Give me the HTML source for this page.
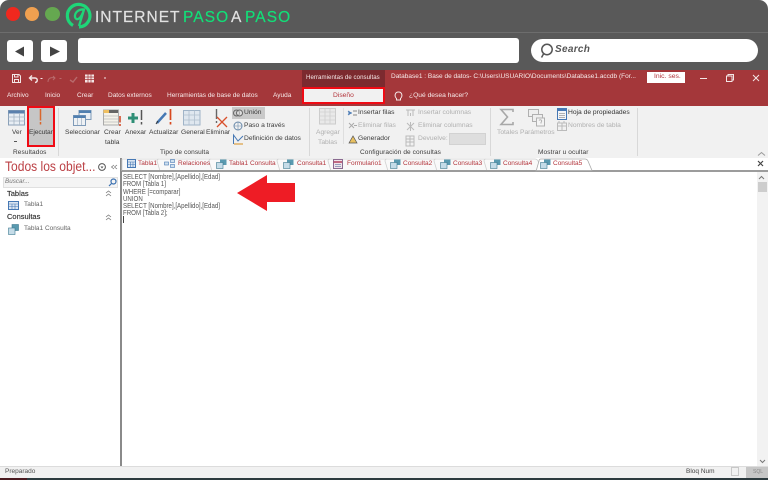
<!DOCTYPE html>
<html>
<head>
<meta charset="utf-8">
<style>
html,body{margin:0;padding:0;width:768px;height:480px;overflow:hidden;background:#fff}
#p{position:relative;width:768px;height:480px;overflow:hidden;font-family:"Liberation Sans",sans-serif;background:#fff;filter:blur(.3px)}
#p div,#p span.t{position:absolute}
.t{white-space:nowrap;line-height:1;color:#3c3c3c;font-size:6.7px}
.w{color:#f7eaea}
.g{color:#b0b0b0}
.r{color:#b3353c}
.b{background:#fff;border-radius:3px}
svg{position:absolute;overflow:visible}
</style>
</head>
<body>
<div id="p">
<!-- browser chrome -->
<div style="left:0;top:0;width:768px;height:70px;background:#595959;border-radius:9px 9px 0 0"></div>
<div style="left:0;top:32px;width:768px;height:1px;background:#6d6d6d"></div>
<div style="left:6px;top:7px;width:14px;height:14px;border-radius:50%;background:#f0281e"></div>
<div style="left:25px;top:7px;width:14px;height:14px;border-radius:50%;background:#f0a050"></div>
<div style="left:45px;top:7px;width:15px;height:14px;border-radius:50%;background:#65a850"></div>
<svg style="left:65px;top:2px" width="30" height="28" viewBox="0 0 30 28"><path d="M8 23.500A11.300 11.300 0 1 1 14 25" fill="none" stroke="#1ed678" stroke-width="3.200"/><path d="M19 7.500C13 7 9.500 11 10 15C11 19 16 18 19 7.500ZM19 7.500L14 24" fill="none" stroke="#1ed678" stroke-width="2.300"/></svg>
<span class="t" style="left:95px;top:10px;font-size:15.500px;color:#e2e2e2;letter-spacing:1px;-webkit-text-stroke:.2px #e2e2e2">INTERNET</span>
<span class="t" style="left:183px;top:10px;font-size:15.500px;color:#12df78;letter-spacing:1.100px;-webkit-text-stroke:.2px #12df78">PASO</span>
<span class="t" style="left:231px;top:10px;font-size:15.500px;color:#e2e2e2;-webkit-text-stroke:.2px #e2e2e2">A</span>
<span class="t" style="left:245px;top:10px;font-size:15.500px;color:#12df78;letter-spacing:1.100px;-webkit-text-stroke:.2px #12df78">PASO</span>

<div class="b" style="left:7px;top:40px;width:26px;height:22px"></div>
<svg style="left:14px;top:46px" width="12" height="11"><path d="M1 5.500L10 .5V10.500Z" fill="#444"/></svg>
<div class="b" style="left:41px;top:40px;width:26px;height:22px"></div>
<svg style="left:49px;top:46px" width="12" height="11"><path d="M11 5.500L1 .5V10.500Z" fill="#444"/></svg>
<div class="b" style="left:78px;top:38px;width:441px;height:25px"></div>
<div style="left:531px;top:39px;width:227px;height:23px;background:#fff;border-radius:12px"></div>
<svg style="left:539px;top:43px" width="15" height="16"><circle cx="8" cy="6.500" r="5.200" fill="none" stroke="#555" stroke-width="1.500"/><path d="M4.500 11L2.500 14.500" stroke="#555" stroke-width="1.500"/></svg>
<span class="t" style="left:555px;top:45px;font-size:10px;font-weight:bold;font-style:italic;color:#555;letter-spacing:.3px">Search</span>

<!-- title bar -->
<div style="left:0;top:70px;width:768px;height:36px;background:#a4373a"></div>
<div style="left:302px;top:70px;width:83px;height:17px;background:#7c2a2f"></div>
<svg style="left:11px;top:73px" width="90" height="11" fill="none" stroke="#f3e6e6"><path d="M1.500 1.500H8L9.500 3V9.500H1.500ZM3.500 1.500V4H7V1.500M3.500 9.500V6.500H7.500V9.500"/><path d="M19 5H24C27 5 27 9 24 9.500M21 2.500L18.500 5L21 7.500" stroke-width="1.400"/><path d="M29.500 5.500H31.500" stroke-width="1"/><path d="M37 9C37 5 40 4 44 5M42 3L44 5L42 7" stroke="#b86a6c"/><path d="M48.500 5.500H50.500" stroke="#b86a6c"/><path d="M59 7L62 9L66 4" stroke="#b86a6c" stroke-width="1.400"/><rect x="74" y="1.500" width="9" height="8" fill="#f3e6e6" stroke="none"/><path d="M74 4H83M74 6.500H83M77 1.500V9.500M80 1.500V9.500" stroke="#a4373a" stroke-width=".7"/><path d="M93 5H95" stroke-width="1"/></svg>
<span class="t w" style="left:306px;top:75px;font-size:6.100px;letter-spacing:.05px">Herramientas de consultas</span>
<span class="t w" style="left:391px;top:74px;font-size:6.500px">Database1 : Base de datos- C:\Users\USUARIO\Documents\Database1.accdb (For...</span>
<div style="left:647px;top:72px;width:38px;height:11px;background:#fff"></div>
<span class="t r" style="left:654px;top:74px;font-size:6.800px">Inic. ses.</span>
<div style="left:700px;top:78px;width:7px;height:1px;background:#f3e6e6"></div>
<svg style="left:726px;top:74px" width="9" height="9" fill="none" stroke="#f3e6e6"><rect x=".5" y="2" width="5.500" height="5.500"/><path d="M2 2V.5H7.500V6H6"/></svg>
<svg style="left:752px;top:74px" width="9" height="9" stroke="#f3e6e6"><path d="M1 1L7 7M7 1L1 7"/></svg>

<!-- tabs -->
<span class="t w" style="left:7px;top:93px;font-size:6.500px">Archivo</span>
<span class="t w" style="left:45px;top:93px;font-size:6.500px">Inicio</span>
<span class="t w" style="left:77px;top:93px;font-size:6.500px">Crear</span>
<span class="t w" style="left:108px;top:93px;font-size:6.500px">Datos externos</span>
<span class="t w" style="left:167px;top:93px;font-size:6.500px">Herramientas de base de datos</span>
<span class="t w" style="left:273px;top:93px;font-size:6.500px">Ayuda</span>
<div style="left:302px;top:87px;width:83px;height:17px;background:#f1f1f1;border:2px solid #f00a14;box-sizing:border-box"></div>
<span class="t r" style="left:333px;top:93px">Diseño</span>
<svg style="left:394px;top:91px" width="9" height="12" fill="none" stroke="#f3e6e6"><path d="M2.500 7.500C0 5 1 1 4.500 1S9 5 6.500 7.500V9H2.500Z"/></svg>
<span class="t w" style="left:409px;top:93px">¿Qué desea hacer?</span>

<!-- ribbon -->
<div style="left:0;top:106px;width:768px;height:52px;background:#f1f1f1"></div>
<div style="left:58px;top:108px;width:1px;height:48px;background:#d8d8d8"></div>
<div style="left:309px;top:108px;width:1px;height:48px;background:#d8d8d8"></div>
<div style="left:490px;top:108px;width:1px;height:48px;background:#d8d8d8"></div>
<div style="left:637px;top:108px;width:1px;height:48px;background:#d8d8d8"></div>

<!-- Ver -->
<svg style="left:8px;top:110px" width="18" height="16"><rect x=".5" y=".5" width="16" height="14.500" fill="#e8eef4" stroke="#8aa0b8"/><rect x=".5" y=".5" width="16" height="3" fill="#5a80ad"/><path d="M.5 7H17M.5 11H17M6 3V15M11.500 3V15" stroke="#a5b4c4" stroke-width=".8"/></svg>
<span class="t" style="left:12px;top:130px;font-size:6.500px">Ver</span>
<div style="left:14px;top:141px;width:3px;height:1px;background:#555"></div>
<!-- Ejecutar -->
<div style="left:27px;top:106px;width:28px;height:41px;background:#c6c6c6;border:2px solid #f00a14;box-sizing:border-box"></div>
<svg style="left:38px;top:108px" width="5" height="18"><path d="M2.500 1V12.500M2.500 14V16.500" stroke="#d9662b" stroke-width="1.500"/></svg>
<span class="t" style="left:29px;top:130px;font-size:6.700px;letter-spacing:-.1px">Ejecutar</span>
<span class="t" style="left:13px;top:150px;font-size:6.500px;letter-spacing:.1px">Resultados</span>

<!-- query type -->
<svg style="left:73px;top:110px" width="19" height="17"><rect x="6" y=".5" width="12" height="9" fill="#e8eef4" stroke="#7e9ab8"/><rect x="6" y=".5" width="12" height="2.500" fill="#4f7fb0"/><rect x=".5" y="5.500" width="12" height="10" fill="#eef1f4" stroke="#7e9ab8"/><rect x=".5" y="5.500" width="12" height="2.500" fill="#4f7fb0"/><path d="M4.500 8V15M8.500 8V15" stroke="#9fb0c2" stroke-width=".7"/></svg>
<span class="t" style="left:65px;top:130px">Seleccionar</span>
<svg style="left:103px;top:109px" width="19" height="18"><rect x=".5" y="1" width="15" height="15" fill="#f4f2ea" stroke="#aaa"/><rect x=".5" y="1" width="6" height="3" fill="#f0c060"/><rect x="6" y="1" width="9" height="3" fill="#666"/><path d="M1 7H15M1 10H15M1 13H15" stroke="#bbb" stroke-width=".7"/><path d="M17 7V13.500M17 15V17" stroke="#d0431f" stroke-width="1.500"/></svg>
<span class="t" style="left:104px;top:130px">Crear</span>
<span class="t" style="left:105px;top:140px">tabla</span>
<svg style="left:127px;top:109px" width="18" height="18"><path d="M6 4V14M1 9H11" stroke="#2f8f76" stroke-width="3"/><path d="M14.500 1V11M14.500 13V15.500" stroke="#555" stroke-width="1.500"/></svg>
<span class="t" style="left:125px;top:130px">Anexar</span>
<svg style="left:155px;top:108px" width="19" height="18"><path d="M2 15L11 5" stroke="#4678b4" stroke-width="2.500"/><path d="M1 16L3 13" stroke="#333"/><path d="M15.500 1V12M15.500 14V16.500" stroke="#d8481e" stroke-width="1.700"/></svg>
<span class="t" style="left:149px;top:130px">Actualizar</span>
<svg style="left:183px;top:110px" width="18" height="16"><rect x=".5" y=".5" width="16.500" height="14.500" fill="#dfe7ef" stroke="#a0b4c8"/><path d="M.5 5H17M.5 10H17M6 .5V15M11.500 .5V15" stroke="#b0bfce" stroke-width=".8"/></svg>
<span class="t" style="left:181px;top:130px">General</span>
<svg style="left:214px;top:108px" width="16" height="20"><path d="M2.500 1V11M2.500 13V15" stroke="#666" stroke-width="1.400"/><path d="M3 9L13 19M13 9L3 19" stroke="#d9502c" stroke-width="1.300"/></svg>
<span class="t" style="left:206px;top:130px">Eliminar</span>
<div style="left:232px;top:107px;width:33px;height:12px;background:#c9c9c9"></div>
<svg style="left:233px;top:108px" width="11" height="44" fill="none" stroke="#666"><circle cx="3.500" cy="5" r="3"/><circle cx="6.500" cy="5" r="3" fill="#fff" fill-opacity=".4"/><circle cx="5" cy="18" r="4" stroke="#6a8aaa"/><path d="M1 18H9M5 14V22" stroke="#6a8aaa" stroke-width=".6"/><path d="M.5 36V27L5 33L10 28" stroke="#4678b4"/><path d="M1 36H10" stroke="#d8901e"/></svg>
<span class="t" style="left:244px;top:110px">Unión</span>
<span class="t" style="left:244px;top:123px">Paso a través</span>
<span class="t" style="left:244px;top:136px">Definición de datos</span>
<span class="t" style="left:160px;top:150px;font-size:6.500px;letter-spacing:.1px">Tipo de consulta</span>

<!-- config -->
<svg style="left:319px;top:108px" width="18" height="17"><rect x=".5" y=".5" width="16" height="15.500" fill="#e9e9e9" stroke="#ccc"/><path d="M.5 4H16M.5 8H16M.5 12H16M6 .5V16M11 .5V16" stroke="#cfcfcf" stroke-width=".8"/></svg>
<span class="t g" style="left:316px;top:130px">Agregar</span>
<span class="t g" style="left:318px;top:140px">Tablas</span>
<div style="left:343px;top:108px;width:1px;height:36px;background:#dedede"></div>
<svg style="left:348px;top:108px" width="9" height="40"><path d="M0 5H4M0 3L3 5L0 7" stroke="#4678b4" fill="none"/><path d="M5 3H9M5 7H9" stroke="#888"/><path d="M1 15L6 20M6 15L1 20M6 17.500H9" stroke="#aaa" fill="none"/><path d="M1 35L5 28L9 35Z" fill="#e8c060" stroke="#555" stroke-width=".7"/></svg>
<span class="t" style="left:358px;top:110px">Insertar filas</span>
<span class="t g" style="left:358px;top:123px">Eliminar filas</span>
<span class="t" style="left:358px;top:136px">Generador</span>
<svg style="left:405px;top:108px" width="12" height="40" fill="none" stroke="#bbb"><path d="M1 2H10M3 2V8M8 2V8M5.500 5V8"/><path d="M2 15L9 22M9 15L2 22M5.500 14V23"/><path d="M1 28H9V38H1ZM1 31H9M1 34H9M5 28V38"/></svg>
<span class="t g" style="left:418px;top:110px">Insertar columnas</span>
<span class="t g" style="left:418px;top:123px">Eliminar columnas</span>
<span class="t g" style="left:418px;top:136px">Devuelve:</span>
<div style="left:449px;top:133px;width:37px;height:12px;background:#dedede;border:1px solid #d2d2d2;box-sizing:border-box"></div>
<span class="t" style="left:360px;top:150px;font-size:6.500px;letter-spacing:.1px">Configuración de consultas</span>

<!-- show -->
<svg style="left:499px;top:108px" width="16" height="18"><path d="M14 4V1.500H2L8.500 9L2 16.500H14V14" fill="none" stroke="#a8a8a8" stroke-width="1.600"/></svg>
<span class="t g" style="left:497px;top:130px">Totales</span>
<span class="t g" style="left:520px;top:130px">Parámetros</span>
<svg style="left:528px;top:109px" width="18" height="18" fill="none" stroke="#b0b0b0"><rect x=".5" y=".5" width="10" height="7" fill="#eee"/><rect x="4.500" y="5.500" width="10" height="7" fill="#eee"/><rect x="8.500" y="9" width="8" height="8" fill="#f4f4f4"/><path d="M11 11.500C12 10 15 11 13 13.500V14.500"/></svg>
<svg style="left:557px;top:108px" width="10" height="12"><rect x=".5" y=".5" width="9" height="11" fill="#f4f6f8" stroke="#4678b4"/><rect x=".5" y=".5" width="9" height="2.500" fill="#4678b4"/><path d="M2 5.500H8M2 7.500H8M2 9.500H8" stroke="#999" stroke-width=".7"/></svg>
<span class="t" style="left:568px;top:110px;color:#333">Hoja de propiedades</span>
<svg style="left:557px;top:121px" width="10" height="10" fill="none" stroke="#bbb"><path d="M.5 2H9.500V9.500H.5ZM.5 5H9.500M5 2V9.500M2 0V2M7 0V2"/></svg>
<span class="t g" style="left:568px;top:123px">Nombres de tabla</span>
<span class="t" style="left:538px;top:150px;font-size:6.500px;letter-spacing:.1px">Mostrar u ocultar</span>
<svg style="left:757px;top:151px" width="9" height="6" fill="none" stroke="#999"><path d="M1 4.500L4.500 1.500L8 4.500"/></svg>

<!-- nav pane -->
<div style="left:0;top:158px;width:120px;height:308px;background:#fff"></div>
<div style="left:120px;top:158px;width:2px;height:308px;background:#8a8a8a"></div>
<span class="t" style="left:5px;top:160px;font-size:14.200px;color:#bc4146;transform:scaleX(.85);transform-origin:0 0">Todos los objet...</span>
<svg style="left:98px;top:163px" width="22" height="9" fill="none" stroke="#555"><circle cx="4" cy="4" r="3.400"/><path d="M2.500 3.500H5.500L4 5.500Z" fill="#555" stroke="none"/><path d="M16 2L13.500 4L16 6M19 2L16.500 4L19 6" stroke="#777" stroke-width=".8"/></svg>
<div style="left:3px;top:177px;width:115px;height:11px;background:#f4f4f4;border:1px solid #e0e0e0;box-sizing:border-box"></div>
<span class="t" style="left:5px;top:179px;font-size:6.300px;color:#777;font-style:italic">Buscar...</span>
<svg style="left:108px;top:178px" width="9" height="9" fill="none" stroke="#3a70b0" stroke-width="1.200"><circle cx="5.500" cy="3.500" r="2.500"/><path d="M3.500 5.500L1 8"/></svg>
<span class="t" style="left:7px;top:190px;font-size:7.500px;color:#333;-webkit-text-stroke:.15px #333">Tablas</span>
<svg style="left:105px;top:190px" width="7" height="8" fill="none" stroke="#777" stroke-width=".8"><path d="M1 3L3.500 1L6 3M1 6L3.500 4L6 6"/></svg>
<svg style="left:8px;top:201px" width="11" height="9"><rect x=".5" y=".5" width="10" height="8" fill="#dbe6f2" stroke="#4678b4"/><path d="M.5 3H10M.5 5.500H10M4 3V8M7 3V8" stroke="#4678b4" stroke-width=".6"/></svg>
<span class="t" style="left:24px;top:202px;font-size:6.500px;color:#666">Tabla1</span>
<span class="t" style="left:7px;top:213px;font-size:7.500px;color:#333;-webkit-text-stroke:.15px #333">Consultas</span>
<svg style="left:105px;top:214px" width="7" height="8" fill="none" stroke="#777" stroke-width=".8"><path d="M1 3L3.500 1L6 3M1 6L3.500 4L6 6"/></svg>
<svg style="left:8px;top:224px" width="11" height="11"><rect x="4" y=".5" width="6.500" height="6" fill="#5a9ab0" stroke="#3c7a90" stroke-width=".6"/><rect x=".5" y="4" width="6.500" height="6.500" fill="#c5dce8" stroke="#3c7a90" stroke-width=".6"/></svg>
<span class="t" style="left:24px;top:226px;font-size:6.500px;color:#666">Tabla1 Consulta</span>

<!-- doc tabs -->
<svg style="left:122px;top:158px" width="646" height="14" fill="#f9f9f9" stroke="#d0d0d0" stroke-width=".8">
<path d="M0 13V1H36Q38 1 39 3L43 13"/>
<path d="M38 13L35 3Q35 1 37 1H88Q90 1 91 3L95 13"/>
<path d="M90 13L87 3Q87 1 89 1H156Q158 1 159 3L163 13"/>
<path d="M158 13L155 3Q155 1 157 1H207Q209 1 210 3L214 13"/>
<path d="M209 13L206 3Q206 1 208 1H264Q266 1 267 3L271 13"/>
<path d="M266 13L263 3Q263 1 265 1H313Q315 1 316 3L320 13"/>
<path d="M315 13L312 3Q312 1 314 1H363Q365 1 366 3L370 13"/>
<path d="M365 13L362 3Q362 1 364 1H413Q415 1 416 3L420 13"/>
</svg>
<div style="left:122px;top:170px;width:646px;height:2px;background:#9c9c9c"></div>
<svg style="left:122px;top:158px" width="646" height="14"><path d="M414 13.500L417 3Q417 1 419 1H463Q465 1 466 3L470 12.500H414Z" fill="#fff" stroke="#aaa" stroke-width=".8"/></svg>

<svg style="left:127px;top:159px" width="9" height="9"><rect x=".5" y=".5" width="8" height="8" fill="#dbe6f2" stroke="#4678b4"/><path d="M.5 3H8M.5 5.500H8M3.500 3V8M6 3V8" stroke="#4678b4" stroke-width=".6"/></svg>
<span class="t r" style="left:138px;top:161px;font-size:6.500px">Tabla1</span>
<svg style="left:164px;top:159px" width="11" height="10" stroke="#4678b4" fill="#cfe0ee" stroke-width=".6"><rect x=".5" y="3" width="4" height="3"/><rect x="6.500" y=".5" width="4" height="3"/><rect x="6.500" y="5.500" width="4" height="3"/></svg>
<span class="t r" style="left:178px;top:161px;font-size:6.500px">Relaciones</span>
<svg style="left:216px;top:159px" width="11" height="10"><rect x="4" y=".5" width="6.500" height="5.500" fill="#5a9ab0"/><rect x=".5" y="3.500" width="6.500" height="6" fill="#c5dce8" stroke="#3c7a90" stroke-width=".6"/></svg>
<span class="t r" style="left:229px;top:161px;font-size:6.500px">Tabla1 Consulta</span>
<svg style="left:283px;top:159px" width="11" height="10"><rect x="4" y=".5" width="6.500" height="5.500" fill="#5a9ab0"/><rect x=".5" y="3.500" width="6.500" height="6" fill="#c5dce8" stroke="#3c7a90" stroke-width=".6"/></svg>
<span class="t r" style="left:297px;top:161px;font-size:6.500px">Consulta1</span>
<svg style="left:333px;top:159px" width="10" height="10"><rect x=".5" y=".5" width="9" height="9" fill="#f0e4ea" stroke="#8a6a90"/><path d="M.5 3H9" stroke="#b04060" stroke-width="1.500"/><path d="M2 5.500H8M2 7.500H8" stroke="#7a8ab0" stroke-width=".7"/></svg>
<span class="t r" style="left:347px;top:161px;font-size:6.500px">Formulario1</span>
<svg style="left:390px;top:159px" width="11" height="10"><rect x="4" y=".5" width="6.500" height="5.500" fill="#5a9ab0"/><rect x=".5" y="3.500" width="6.500" height="6" fill="#c5dce8" stroke="#3c7a90" stroke-width=".6"/></svg>
<span class="t r" style="left:403px;top:161px;font-size:6.500px">Consulta2</span>
<svg style="left:440px;top:159px" width="11" height="10"><rect x="4" y=".5" width="6.500" height="5.500" fill="#5a9ab0"/><rect x=".5" y="3.500" width="6.500" height="6" fill="#c5dce8" stroke="#3c7a90" stroke-width=".6"/></svg>
<span class="t r" style="left:453px;top:161px;font-size:6.500px">Consulta3</span>
<svg style="left:490px;top:159px" width="11" height="10"><rect x="4" y=".5" width="6.500" height="5.500" fill="#5a9ab0"/><rect x=".5" y="3.500" width="6.500" height="6" fill="#c5dce8" stroke="#3c7a90" stroke-width=".6"/></svg>
<span class="t r" style="left:503px;top:161px;font-size:6.500px">Consulta4</span>
<svg style="left:540px;top:159px" width="11" height="10"><rect x="4" y=".5" width="6.500" height="5.500" fill="#5a9ab0"/><rect x=".5" y="3.500" width="6.500" height="6" fill="#c5dce8" stroke="#3c7a90" stroke-width=".6"/></svg>
<span class="t r" style="left:553px;top:161px;font-size:6.500px">Consulta5</span>
<svg style="left:757px;top:160px" width="7" height="7" stroke="#444" stroke-width="1.200"><path d="M1 1L6 6M6 1L1 6"/></svg>

<!-- sql -->
<div style="left:123px;top:173px;font-size:7.300px;line-height:7.300px;color:#555;white-space:pre;transform:scaleX(.84);transform-origin:0 0">SELECT [Nombre],[Apellido],[Edad]
FROM [Tabla 1]
WHERE [=comparar]
UNION
SELECT [Nombre],[Apellido],[Edad]
FROM [Tabla 2];</div>
<div style="left:123px;top:216px;width:1px;height:7px;background:#444"></div>
<svg style="left:237px;top:175px" width="60" height="38"><path d="M0 18L30 0V8H58V27H30V36Z" fill="#ee1c25"/></svg>

<!-- scrollbar -->
<div style="left:757px;top:172px;width:11px;height:294px;background:#f2f2f2"></div>
<svg style="left:758px;top:175px" width="7" height="5" fill="none" stroke="#777"><path d="M1 4L3.500 1.500L6 4"/></svg>
<div style="left:758px;top:182px;width:9px;height:10px;background:#cdcdcd"></div>
<svg style="left:759px;top:459px" width="7" height="5" fill="none" stroke="#777"><path d="M1 1L3.500 3.500L6 1"/></svg>

<!-- status bar -->
<div style="left:0;top:466px;width:768px;height:12px;background:#f1f1f1;border-top:1px solid #dcdcdc;box-sizing:border-box"></div>
<span class="t" style="left:5px;top:469px;font-size:6.500px;color:#555">Preparado</span>
<span class="t" style="left:686px;top:469px;font-size:6.500px;color:#444">Bloq Num</span>
<div style="left:731px;top:467px;width:8px;height:9px;border:1px solid #c8c8c8;box-sizing:border-box"></div>
<div style="left:746px;top:467px;width:22px;height:11px;background:#c6c6c6"></div>
<span class="t" style="left:753px;top:470px;font-size:5px;color:#888">SQL</span>
<div style="left:0;top:478px;width:768px;height:2px;background:#2c3a3e"></div>
<div style="left:0;top:478px;width:27px;height:2px;background:#4a1a20"></div>
</div>
</body>
</html>
